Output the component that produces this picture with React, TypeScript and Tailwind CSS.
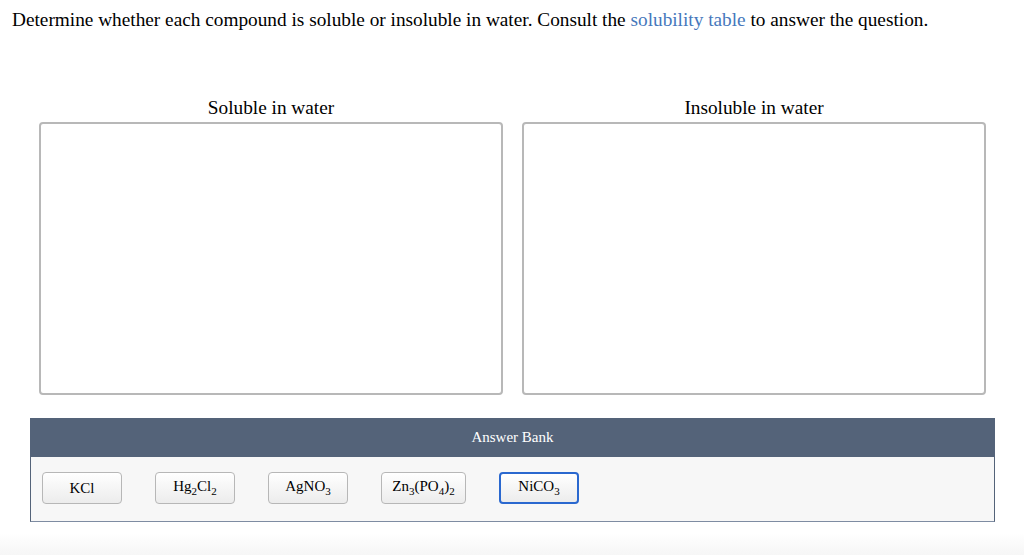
import React from 'react';

// ── Chip in the answer bank ────────────────────────────────────────────────
function Chip({ children, width, active }: { children: React.ReactNode; width: string; active?: boolean }) {
  return (
    <button
      className={`${width} h-[32px] rounded-[4px] flex items-center justify-center text-[15px] leading-none text-black bg-gradient-to-b from-white to-[#ececec] ${
        active ? 'border-2 border-[#2a68cf]' : 'border border-[#b7b7b7]'
      }`}
    >
      <span>{children}</span>
    </button>
  );
}

// ── Drop zone column ───────────────────────────────────────────────────────
function Zone({ label, width }: { label: string; width: string }) {
  return (
    <div className={`${width} flex flex-col`}>
      <div className="h-[30px] pt-[5px] flex items-start justify-center text-[19.3px] leading-[22px] text-black">{label}</div>
      <div className="h-[273px] border-2 border-[#b8b8b8] rounded-[4px] bg-white" />
    </div>
  );
}

const sub = 'text-[11px] align-[-4px]';

export default function App() {
  return (
    <div className="w-[1024px] h-[555px] bg-white overflow-hidden flex flex-col" style={{ fontFamily: '"Liberation Serif", "Times New Roman", serif' }}>
      {/* Prompt */}
      <p className="pl-[12px] pt-[8px] text-[19.3px] leading-[24px] text-black whitespace-nowrap">
        Determine whether each compound is soluble or insoluble in water. Consult the{' '}
        <span className="text-[#4678bc]">solubility table</span> to answer the question.
      </p>

      {/* Drop zones */}
      <div className="flex gap-[19px] pl-[39px] mt-[60px]">
        <Zone label="Soluble in water" width="w-[464px]" />
        <Zone label="Insoluble in water" width="w-[464px]" />
      </div>

      {/* Answer bank */}
      <div className="ml-[30px] mt-[23px] w-[965px]">
        <div className="h-[39px] bg-[#546379] flex items-center justify-center text-white text-[15px]">
          Answer Bank
        </div>
        <div className="h-[65px] bg-[#f7f7f7] border border-t-0 border-[#546379] border-b-[#7e8ca2] flex items-start gap-[33px] pl-[11px] pt-[15px]">
          <Chip width="w-[80px]">KCl</Chip>
          <Chip width="w-[80px]">
            Hg<span className={sub}>2</span>Cl<span className={sub}>2</span>
          </Chip>
          <Chip width="w-[80px]">
            AgNO<span className={sub}>3</span>
          </Chip>
          <Chip width="w-[85px]">
            Zn<span className={sub}>3</span>(PO<span className={sub}>4</span>)<span className={sub}>2</span>
          </Chip>
          <Chip width="w-[80px]" active>
            NiCO<span className={sub}>3</span>
          </Chip>
        </div>
      </div>

      {/* Bottom fade */}
      <div className="mt-auto h-[22px] bg-gradient-to-b from-white to-[#f6f6f6]" />
    </div>
  );
}
